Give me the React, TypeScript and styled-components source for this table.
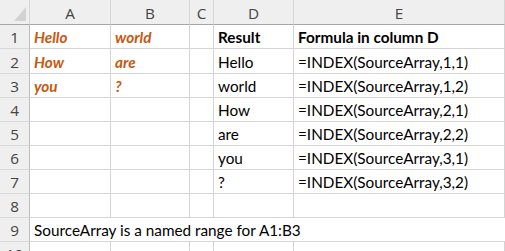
import styled, { createGlobalStyle } from 'styled-components';

const GlobalStyle = createGlobalStyle`
  html, body {
    margin: 0;
    padding: 0;
    background: #ffffff;
    overflow: hidden;
  }
`;

const Sheet = styled.div`
  display: grid;
  grid-template-columns: 30px 81px 79px 24px 80px 1fr;
  grid-template-rows: 25px 24px 25px 24px 24px 24px 24px 24px 24px 24px 24px;
  width: 505px;
  height: 251px;
  overflow: hidden;
  font-family: Lato, 'Liberation Sans', sans-serif;
  font-size: 15.3px;
  color: #000;
`;

const Corner = styled.div`
  background: #efefef;
  border-right: 1px solid #d6d6d6;
  border-bottom: 1px solid #a6a6a6;
  display: flex;
  align-items: flex-end;
  justify-content: flex-end;
  padding: 0 3px 3px 0;
`;

const ColHead = styled.div`
  background: #efefef;
  border-right: 1px solid #d6d6d6;
  border-bottom: 1px solid #a6a6a6;
  display: flex;
  align-items: center;
  justify-content: center;
  font-family: 'Open Sans', 'Noto Sans', sans-serif;
  font-size: 15.3px;
  color: #444;
  padding-top: 1px;
`;

const RowHead = styled.div`
  background: #efefef;
  border-right: 1px solid #bdbdbd;
  border-bottom: 1px solid #d6d6d6;
  display: flex;
  align-items: center;
  justify-content: center;
  font-family: 'Open Sans', 'Noto Sans', sans-serif;
  font-size: 15.3px;
  color: #444;
  padding-top: 1px;
`;

const Cell = styled.div<{ $tone?: 'plain' | 'head' | 'source'; $span?: boolean }>`
  border-right: ${({ $span }) => ($span ? 'none' : '1px solid #d4d4d4')};
  border-bottom: 1px solid #d4d4d4;
  grid-column: ${({ $span }) => ($span ? '2 / -1' : 'auto')};
  display: flex;
  align-items: flex-end;
  padding: 0 0 2px 4px;
  white-space: nowrap;
  overflow: visible;
  font-weight: ${({ $tone }) => ($tone === 'plain' || !$tone ? 400 : 700)};
  font-style: ${({ $tone }) => ($tone === 'source' ? 'italic' : 'normal')};
  color: ${({ $tone }) => ($tone === 'source' ? '#c65911' : '#000')};
`;

const columns = ['A', 'B', 'C', 'D', 'E'];

type Row = { a?: string; b?: string; d?: string; e?: string; head?: boolean };

const rows: Row[] = [
  { a: 'Hello', b: 'world', d: 'Result', e: 'Formula in column D', head: true },
  { a: 'How', b: 'are', d: 'Hello', e: '=INDEX(SourceArray,1,1)' },
  { a: 'you', b: '?', d: 'world', e: '=INDEX(SourceArray,1,2)' },
  { d: 'How', e: '=INDEX(SourceArray,2,1)' },
  { d: 'are', e: '=INDEX(SourceArray,2,2)' },
  { d: 'you', e: '=INDEX(SourceArray,3,1)' },
  { d: '?', e: '=INDEX(SourceArray,3,2)' },
  {},
];

export default function App() {
  return (
    <>
      <GlobalStyle />
      <Sheet>
        <Corner>
          <svg width="12" height="14" viewBox="0 0 12 14">
            <polygon points="12,0 12,14 0,14" fill="#d2d2d2" />
          </svg>
        </Corner>
        {columns.map((c) => (
          <ColHead key={c}>{c}</ColHead>
        ))}

        {rows.map((r, i) => (
          <Row key={i} index={i + 1} row={r} />
        ))}

        <RowHead>9</RowHead>
        <Cell $span>SourceArray is a named range for A1:B3</Cell>

        <RowHead>10</RowHead>
        <Cell />
        <Cell />
        <Cell />
        <Cell />
        <Cell />
      </Sheet>
    </>
  );
}

const Row = ({ index, row }: { index: number; row: Row }) => (
  <>
    <RowHead>{index}</RowHead>
    <Cell $tone="source">{row.a}</Cell>
    <Cell $tone="source">{row.b}</Cell>
    <Cell />
    <Cell $tone={row.head ? 'head' : 'plain'}>{row.d}</Cell>
    <Cell $tone={row.head ? 'head' : 'plain'}>{row.e}</Cell>
  </>
);
